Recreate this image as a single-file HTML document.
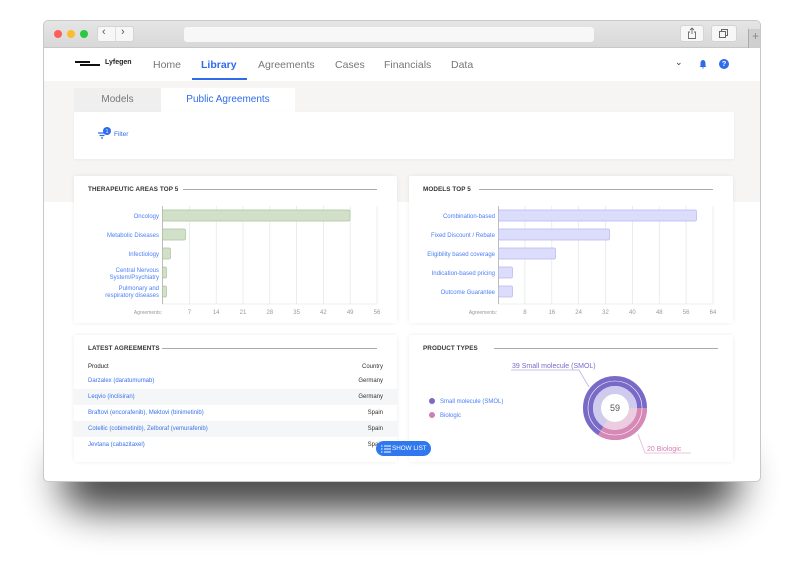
<!DOCTYPE html>
<html><head><meta charset="utf-8"><style>
*{box-sizing:border-box;margin:0;padding:0}
body{width:800px;height:565px;background:#fff;position:relative;overflow:hidden;font-family:"Liberation Sans",sans-serif}
.shadow{position:absolute;left:60px;top:450px;width:680px;height:60px;background:#000;opacity:.75;filter:blur(20px);border-radius:40px}
.win{position:absolute;left:43px;top:20px;width:718px;height:462px;background:#fff;border:1px solid #c8c8c8;border-radius:5px;overflow:hidden}
.title{position:absolute;left:0;top:0;width:718px;height:27px;background:linear-gradient(#e6e5e6,#d9d8d9);border-bottom:1px solid #c9c9c9}
.dot{position:absolute;top:9px;width:8px;height:8px;border-radius:50%}
.btn{position:absolute;background:#f7f7f7;border-radius:3px;border:1px solid #d4d4d4}
.url{position:absolute;left:140px;top:6px;width:410px;height:15px;background:#f7f7f7;border-radius:3px}
.nav{position:absolute;left:0;top:27px;width:718px;height:33px;background:#fff;box-shadow:0 1px 3px rgba(0,0,0,.06)}
.nav span{position:absolute;top:11px;font-size:10.5px;color:#777}
.grey{position:absolute;left:0;top:60px;width:718px;height:121px;background:#f6f5f3}
.card{position:absolute;background:#fff;box-shadow:0 0 4px rgba(0,0,0,.08);border-radius:2px}
.h{position:absolute;font-size:6.3px;font-weight:bold;color:#333;letter-spacing:.1px}
.line{position:absolute;height:1px;background:#aaa}
.lbl{font-size:6px;fill:#4a7ef5;font-family:"Liberation Sans",sans-serif}
.ax{font-size:6px;fill:#999;font-family:"Liberation Sans",sans-serif}
.row{position:absolute;left:0;width:323px;height:16px;font-size:6px;color:#3b73e8}
.row span{position:absolute;left:14px;top:5px}
.row b{position:absolute;right:14px;top:5px;font-weight:normal;color:#333}
</style></head><body>
<div class="shadow"></div>
<div class="win">
 <div class="title">
  <div class="dot" style="left:10px;background:#fc5f57"></div>
  <div class="dot" style="left:23px;background:#fdbb2e"></div>
  <div class="dot" style="left:36px;background:#28c840"></div>
  <div class="btn" style="left:53px;top:5px;width:37px;height:16px"></div>
  <div style="position:absolute;left:58px;top:5px;font-size:11px;color:#555">‹</div>
  <div style="position:absolute;left:77px;top:5px;font-size:11px;color:#555">›</div>
  <div style="position:absolute;left:71px;top:6px;width:1px;height:14px;background:#ddd"></div>
  <div class="url"></div>
  <div class="btn" style="left:636px;top:4px;width:24px;height:17px"></div>
  <div class="btn" style="left:667px;top:4px;width:26px;height:17px"></div>
  <svg style="position:absolute;left:642px;top:6px" width="12" height="13"><path d="M4 5H2.5v6.5h7V5H8M6 1v6M4 3l2-2 2 2" stroke="#666" fill="none" stroke-width=".9"/></svg>
  <svg style="position:absolute;left:674px;top:7px" width="12" height="12"><rect x="1.5" y="3.5" width="6" height="6" stroke="#666" fill="none"/><path d="M3.5 3.5V1.5h6v6H7.5" stroke="#666" fill="none"/></svg>
  <div style="position:absolute;left:704px;top:8px;width:16px;height:22px;background:#cfcfcf;border-left:1px solid #aaa;color:#888;font-size:12px;padding-left:3px">+</div>
 </div>
 <div class="nav">
  <div style="position:absolute;left:31px;top:13px;width:15px;height:2px;background:#111"></div>
  <div style="position:absolute;left:36px;top:16px;width:20px;height:2px;background:#111"></div>
  <span style="left:61px;top:11px;font-size:7px;color:#222;font-weight:bold">Lyfegen</span>
  <span style="left:109px">Home</span>
  <span style="left:157px;color:#2f6bea;font-weight:bold">Library</span>
  <div style="position:absolute;left:148px;top:30px;width:55px;height:2px;background:#2f6bea"></div>
  <span style="left:214px">Agreements</span>
  <span style="left:291px">Cases</span>
  <span style="left:340px">Financials</span>
  <span style="left:407px">Data</span>
  <span style="left:631px;top:9px;font-size:9px;color:#333">⌄</span>
  <svg style="position:absolute;left:654px;top:11px" width="10" height="10"><path d="M5 1C3 1 2.5 3 2.5 4.5V7L1.5 8h7l-1-1V4.5C7.5 3 7 1 5 1zM4 8.5a1 1 0 0 0 2 0" fill="#2f6bea"/></svg>
  <div style="position:absolute;left:675px;top:11px;width:10px;height:10px;border-radius:50%;background:#2f6bea;color:#fff;font-size:7.5px;font-weight:bold;text-align:center;line-height:10px">?</div>
 </div>
 <div class="grey"></div>
 <div style="position:absolute;left:30px;top:67px;width:87px;height:24px;background:#efefef;font-size:10px;color:#777;text-align:center;line-height:24px">Models</div>
 <div style="position:absolute;left:117px;top:67px;width:134px;height:24px;background:#fff;font-size:10px;color:#2f6bea;text-align:center;line-height:24px">Public Agreements</div>
 <div class="card" style="left:30px;top:91px;width:660px;height:47px;box-shadow:0 1px 3px rgba(0,0,0,.05)">
  <svg style="position:absolute;left:23px;top:14px" width="20" height="16"><path d="M1 7h8M2.5 9.5h5M4 12h2" stroke="#2f6bea" stroke-width="1.2"/><circle cx="10" cy="5" r="4" fill="#2f6bea"/><text x="10" y="7" font-size="5" fill="#fff" text-anchor="middle" font-family="Liberation Sans">1</text></svg>
  <div style="position:absolute;left:40px;top:19px;font-size:6.5px;color:#2f6bea">Filter</div>
 </div>

 <div class="card" style="left:30px;top:155px;width:323px;height:147px">
  <div class="h" style="left:14px;top:10px">THERAPEUTIC AREAS TOP 5</div>
  <div class="line" style="left:109px;top:13px;width:194px"></div>
  <svg style="position:absolute;left:0;top:0" width="323" height="147">
   <g stroke="#e3ebe6" stroke-width=".8"><line x1="115.4" y1="30" x2="115.4" y2="128"/><line x1="142.2" y1="30" x2="142.2" y2="128"/><line x1="169" y1="30" x2="169" y2="128"/><line x1="195.8" y1="30" x2="195.8" y2="128"/><line x1="222.6" y1="30" x2="222.6" y2="128"/><line x1="249.4" y1="30" x2="249.4" y2="128"/><line x1="276.2" y1="30" x2="276.2" y2="128"/><line x1="303" y1="30" x2="303" y2="128"/><line x1="88" y1="128" x2="303" y2="128"/></g>
   <line x1="88.5" y1="30" x2="88.5" y2="128" stroke="#aaa" stroke-width=".8"/>
   <g fill="#d3e0c9" stroke="#a9c39b" stroke-width=".7">
    <rect x="88.5" y="34" width="187.5" height="11" rx="1.5"/>
    <rect x="88.5" y="53" width="23" height="11" rx="1.5"/>
    <rect x="88.5" y="72" width="8" height="11" rx="1.5"/>
    <rect x="88.5" y="91" width="4" height="11" rx="1.5"/>
    <rect x="88.5" y="110" width="4" height="11" rx="1.5"/>
   </g>
   <g class="lbl" text-anchor="end">
    <text x="85" y="42">Oncology</text><text x="85" y="61">Metabolic Diseases</text><text x="85" y="80">Infectiology</text>
    <text x="85" y="96">Central Nervous</text><text x="85" y="103">System/Psychiatry</text>
    <text x="85" y="114">Pulmonary and</text><text x="85" y="121">respiratory diseases</text>
   </g>
   <g class="ax" text-anchor="middle"><text x="74" y="138" font-size="5">Agreements:</text><text x="115.4" y="138">7</text><text x="142.2" y="138">14</text><text x="169" y="138">21</text><text x="195.8" y="138">28</text><text x="222.6" y="138">35</text><text x="249.4" y="138">42</text><text x="276.2" y="138">49</text><text x="303" y="138">56</text></g>
  </svg>
 </div>

 <div class="card" style="left:365px;top:155px;width:324px;height:147px">
  <div class="h" style="left:14px;top:10px">MODELS TOP 5</div>
  <div class="line" style="left:70px;top:13px;width:234px"></div>
  <svg style="position:absolute;left:0;top:0" width="324" height="147">
   <g stroke="#e3ebe6" stroke-width=".8"><line x1="115.9" y1="30" x2="115.9" y2="128"/><line x1="142.8" y1="30" x2="142.8" y2="128"/><line x1="169.6" y1="30" x2="169.6" y2="128"/><line x1="196.5" y1="30" x2="196.5" y2="128"/><line x1="223.4" y1="30" x2="223.4" y2="128"/><line x1="250.3" y1="30" x2="250.3" y2="128"/><line x1="277.1" y1="30" x2="277.1" y2="128"/><line x1="304" y1="30" x2="304" y2="128"/><line x1="89" y1="128" x2="304" y2="128"/></g>
   <line x1="89.5" y1="30" x2="89.5" y2="128" stroke="#aaa" stroke-width=".8"/>
   <g fill="#dcdcfb" stroke="#b5b5f3" stroke-width=".7">
    <rect x="89.5" y="34" width="198" height="11" rx="1.5"/>
    <rect x="89.5" y="53" width="111" height="11" rx="1.5"/>
    <rect x="89.5" y="72" width="57" height="11" rx="1.5"/>
    <rect x="89.5" y="91" width="14" height="11" rx="1.5"/>
    <rect x="89.5" y="110" width="14" height="11" rx="1.5"/>
   </g>
   <g class="lbl" text-anchor="end">
    <text x="86" y="42">Combination-based</text><text x="86" y="61">Fixed Discount / Rebate</text><text x="86" y="80">Eligibility based coverage</text><text x="86" y="99">Indication-based pricing</text><text x="86" y="118">Outcome Guarantee</text>
   </g>
   <g class="ax" text-anchor="middle"><text x="74" y="138" font-size="5">Agreements:</text><text x="115.9" y="138">8</text><text x="142.8" y="138">16</text><text x="169.6" y="138">24</text><text x="196.5" y="138">32</text><text x="223.4" y="138">40</text><text x="250.3" y="138">48</text><text x="277.1" y="138">56</text><text x="304" y="138">64</text></g>
  </svg>
 </div>

 <div class="card" style="left:30px;top:314px;width:323px;height:127px">
  <div class="h" style="left:14px;top:10px">LATEST AGREEMENTS</div>
  <div class="line" style="left:88px;top:13px;width:215px"></div>
  <div class="row" style="top:24px;color:#222"><span>Product</span><b>Country</b></div>
  <div class="row" style="top:38px"><span>Darzalex (daratumumab)</span><b>Germany</b></div>
  <div class="row" style="top:54px;background:#f4f6f8"><span>Leqvio (inclisiran)</span><b>Germany</b></div>
  <div class="row" style="top:70px"><span>Braftovi (encorafenib), Mektovi (binimetinib)</span><b>Spain</b></div>
  <div class="row" style="top:86px;background:#f4f6f8"><span>Cotellic (cobimetinib), Zelboraf (vemurafenib)</span><b>Spain</b></div>
  <div class="row" style="top:102px"><span>Jevtana (cabazitaxel)</span><b>Spain</b></div>
 </div>

 <div class="card" style="left:365px;top:314px;width:324px;height:127px">
  <div class="h" style="left:14px;top:10px">PRODUCT TYPES</div>
  <div class="line" style="left:85px;top:13px;width:224px"></div>
  <svg style="position:absolute;left:0;top:0" width="324" height="127">
   <circle cx="23" cy="66" r="3" fill="#7a68c8"/><text x="31" y="68" class="lbl">Small molecule (SMOL)</text>
   <circle cx="23" cy="80" r="3" fill="#d080b0"/><text x="31" y="82" class="lbl">Biologic</text>
   <circle cx="206" cy="73" r="27" fill="none" stroke="#7a6ac8" stroke-width="10"/>
   <circle cx="206" cy="73" r="27" fill="none" stroke="#d688b6" stroke-width="10" stroke-dasharray="57.5 200"/>
   <circle cx="206" cy="73" r="18" fill="none" stroke="#cfcbee" stroke-width="8"/>
   <circle cx="206" cy="73" r="18" fill="none" stroke="#eccde0" stroke-width="8" stroke-dasharray="38.3 200"/>
   <circle cx="206" cy="73" r="27" fill="none" stroke="#fff" stroke-width=".6"/>
   <text x="206" y="76" text-anchor="middle" font-size="9" fill="#555" font-family="Liberation Sans">59</text>
   <path d="M102 35H170L180 52" stroke="#b9b0e6" fill="none" stroke-width=".8"/>
   <text x="103" y="33" font-size="7" fill="#7a6ac8" font-family="Liberation Sans">39 Small molecule (SMOL)</text>
   <path d="M229 99L236 118H282" stroke="#e8b4d2" fill="none" stroke-width=".8"/>
   <text x="238" y="116" font-size="7" fill="#d080b0" font-family="Liberation Sans">20 Biologic</text>
  </svg>
 </div>
 <div style="position:absolute;z-index:5;left:332px;top:420px;width:55px;height:15px;background:#2f78f0;border-radius:8px;color:#fff;font-size:6.3px;line-height:15px;padding-left:16px">SHOW LIST</div>
 <svg style="position:absolute;z-index:6;left:337px;top:424px" width="10" height="8"><path d="M0 1h1.5M3 1h7M0 4h1.5M3 4h7M0 7h1.5M3 7h7" stroke="#fff" stroke-width="1"/></svg>
</div>
</body></html>
